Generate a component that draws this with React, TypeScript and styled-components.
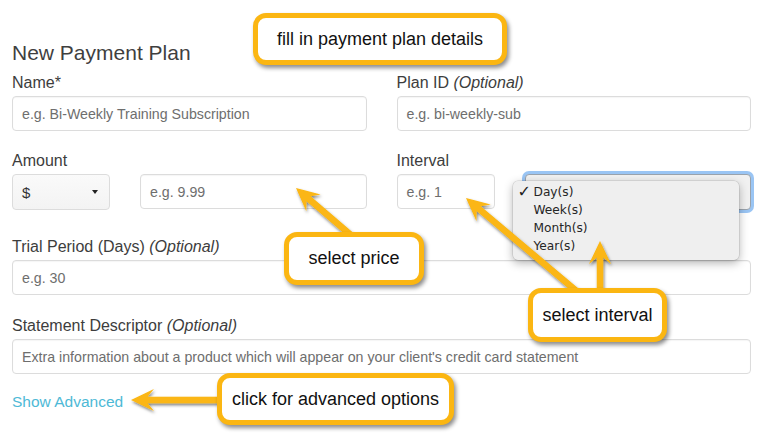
import styled, { createGlobalStyle } from "styled-components";

const GlobalStyle = createGlobalStyle`
  html, body {
    margin: 0;
    padding: 0;
    background: #ffffff;
  }
  body {
    font-family: "Liberation Sans", Arial, sans-serif;
  }
  * {
    box-sizing: border-box;
  }
`;

const ORANGE = "#fbb612";

const Page = styled.div`
  position: relative;
  width: 760px;
  height: 441px;
  padding: 40px 9px 0 12px;
  overflow: hidden;
  color: #3d3d3d;
`;

const Title = styled.h2`
  margin: 0 0 7px;
  font-size: 21px;
  line-height: 26px;
  font-weight: 400;
  color: #3f3f3f;
`;

const Row = styled.div`
  display: grid;
  grid-template-columns: 1fr 1fr;
  column-gap: 30px;
`;

const SplitRow = styled.div`
  display: grid;
  grid-template-columns: 98px 1fr;
  column-gap: 30px;
`;

const FormGroup = styled.div<{ $gap: number }>`
  margin-bottom: ${(p) => p.$gap}px;
`;

const Label = styled.label`
  display: block;
  font-size: 16px;
  line-height: 20px;
  margin-bottom: 3px;
  color: #3d3d3d;
`;

const Optional = styled.em`
  font-style: italic;
`;

const Input = styled.div`
  height: 35px;
  border: 1px solid #dcdcdc;
  border-radius: 4px;
  background: #fff;
  box-shadow: inset 0 1px 1px rgba(0, 0, 0, 0.04);
  padding: 0 9px;
  display: flex;
  align-items: center;
  font-size: 14.2px;
  color: #6e6e6e;
  white-space: nowrap;
  overflow: hidden;
`;

const SelectBox = styled.div<{ $focused?: boolean }>`
  position: relative;
  height: 36px;
  border: 1px solid ${(p) => (p.$focused ? "#9aa3ad" : "#dcdcdc")};
  border-radius: 4px;
  background: ${(p) =>
    p.$focused ? "#f1f1f1" : "linear-gradient(#fafafa, #f3f3f3)"};
  box-shadow: ${(p) =>
    p.$focused ? "0 0 0 3px rgba(120, 178, 240, 0.75)" : "none"};
  padding: 0 9px;
  display: flex;
  align-items: center;
  justify-content: space-between;
  font-size: 15px;
  color: #333;
`;

const Caret = styled.span`
  width: 0;
  height: 0;
  border-left: 3.5px solid transparent;
  border-right: 3.5px solid transparent;
  border-top: 4px solid #222;
  margin-right: 2px;
`;

const Menu = styled.div`
  position: absolute;
  left: -13px;
  top: 6px;
  width: 226px;
  padding: 2px 0 5px;
  background: #efefef;
  border-radius: 5px;
  box-shadow: 0 3px 10px rgba(0, 0, 0, 0.3), 0 0 0 0.5px rgba(0, 0, 0, 0.15);
  font-family: "DejaVu Sans", "Liberation Sans", sans-serif;
  font-size: 12.2px;
  color: #262626;
  z-index: 2;
`;

const MenuItem = styled.div`
  height: 18px;
  display: flex;
  align-items: center;
`;

const Check = styled.span`
  width: 21px;
  padding-left: 5px;
  font-size: 16px;
  line-height: 18px;
  color: #222;
`;

const Link = styled.a`
  display: inline-block;
  margin-top: 18px;
  font-size: 15.5px;
  line-height: 20px;
  color: #4db9d6;
  text-decoration: none;
`;

const Overlay = styled.svg`
  position: absolute;
  left: 0;
  top: 0;
  pointer-events: none;
  z-index: 3;
`;

const Callout = styled.div<{ $x: number; $y: number; $w: number; $h: number }>`
  position: absolute;
  left: ${(p) => p.$x}px;
  top: ${(p) => p.$y}px;
  width: ${(p) => p.$w}px;
  height: ${(p) => p.$h}px;
  border: 5px solid ${ORANGE};
  border-radius: 13px;
  background: #fff;
  box-shadow: 2px 3px 4px rgba(0, 0, 0, 0.45);
  display: flex;
  align-items: center;
  justify-content: center;
  font-size: 18px;
  color: #111;
  white-space: nowrap;
  z-index: 4;
`;

type Pt = [number, number];

const arrowPath = (tail: Pt, tip: Pt): string => {
  const dx = tip[0] - tail[0];
  const dy = tip[1] - tail[1];
  const len = Math.hypot(dx, dy);
  const ux = dx / len;
  const uy = dy / len;
  const nx = -uy;
  const ny = ux;
  const L = 23;
  const W = 11;
  const w = 3.2;
  const at = (along: number, side: number): string =>
    `${(tip[0] - ux * along + nx * side).toFixed(2)},${(
      tip[1] - uy * along + ny * side
    ).toFixed(2)}`;
  const tailAt = (side: number): string =>
    `${(tail[0] + nx * side).toFixed(2)},${(tail[1] + ny * side).toFixed(2)}`;
  return `M${tip[0]},${tip[1]} L${at(L, W)} L${at(L * 0.72, w)} L${tailAt(
    w
  )} L${tailAt(-w)} L${at(L * 0.72, -w)} L${at(L, -W)} Z`;
};

const arrows: { tail: Pt; tip: Pt }[] = [
  { tail: [352, 236], tip: [296, 188] },
  { tail: [580, 294], tip: [466, 198] },
  { tail: [600, 294], tip: [600, 241] },
  { tail: [222, 400], tip: [131, 400] },
];

const intervals = ["Day(s)", "Week(s)", "Month(s)", "Year(s)"];

const App = () => {
  return (
    <>
      <GlobalStyle />
      <Page>
        <Title>New Payment Plan</Title>

        <FormGroup $gap={20}>
          <Row>
            <div>
              <Label>Name*</Label>
              <Input>e.g. Bi-Weekly Training Subscription</Input>
            </div>
            <div>
              <Label>
                Plan ID <Optional>(Optional)</Optional>
              </Label>
              <Input>e.g. bi-weekly-sub</Input>
            </div>
          </Row>
        </FormGroup>

        <FormGroup $gap={27}>
          <Row>
            <div>
              <Label>Amount</Label>
              <SplitRow>
                <SelectBox>
                  <span>$</span>
                  <Caret />
                </SelectBox>
                <Input>e.g. 9.99</Input>
              </SplitRow>
            </div>
            <div>
              <Label>Interval</Label>
              <SplitRow>
                <Input>e.g. 1</Input>
                <SelectBox $focused>
                  <span />
                  <Caret />
                  <Menu>
                    {intervals.map((name, i) => (
                      <MenuItem key={name}>
                        <Check>{i === 0 ? "✓" : ""}</Check>
                        {name}
                      </MenuItem>
                    ))}
                  </Menu>
                </SelectBox>
              </SplitRow>
            </div>
          </Row>
        </FormGroup>

        <FormGroup $gap={21}>
          <Label>
            Trial Period (Days) <Optional>(Optional)</Optional>
          </Label>
          <Input>e.g. 30</Input>
        </FormGroup>

        <FormGroup $gap={0}>
          <Label>
            Statement Descriptor <Optional>(Optional)</Optional>
          </Label>
          <Input>
            Extra information about a product which will appear on your
            client's credit card statement
          </Input>
        </FormGroup>

        <Link href="#">Show Advanced</Link>

        <Overlay width={760} height={441} viewBox="0 0 760 441">
          <defs>
            <filter id="arrowShadow" x="-20%" y="-20%" width="140%" height="140%">
              <feDropShadow
                dx="1"
                dy="2"
                stdDeviation="1.4"
                floodColor="#000"
                floodOpacity="0.5"
              />
            </filter>
          </defs>
          {arrows.map((a, i) => (
            <path
              key={i}
              d={arrowPath(a.tail, a.tip)}
              fill={ORANGE}
              filter="url(#arrowShadow)"
            />
          ))}
        </Overlay>

        <Callout $x={253} $y={13} $w={254} $h={52}>
          fill in payment plan details
        </Callout>
        <Callout $x={284} $y={232} $w={140} $h={53}>
          select price
        </Callout>
        <Callout $x={528} $y={288} $w={139} $h={54}>
          select interval
        </Callout>
        <Callout $x={217} $y={373} $w={237} $h={52}>
          click for advanced options
        </Callout>
      </Page>
    </>
  );
};

export default App;
